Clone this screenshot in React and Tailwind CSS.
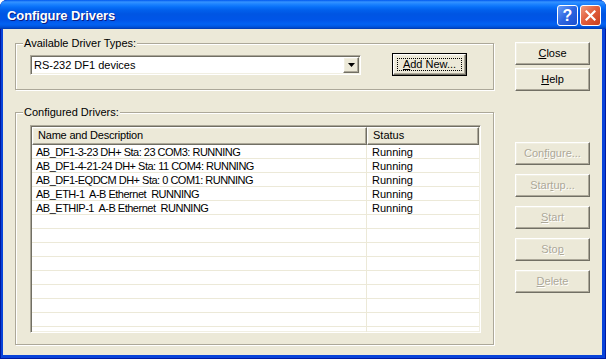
import React from "react";

const raised =
  "bg-[#ECE9D8] border border-t-white border-l-white border-r-[#716F64] border-b-[#716F64] shadow-[inset_-1px_-1px_0_#ACA899,inset_1px_1px_0_#F1EFE2]";
const sunken =
  "border border-t-[#ACA899] border-l-[#ACA899] border-r-white border-b-white shadow-[inset_1px_1px_0_#716F64,inset_-1px_-1px_0_#F1EFE2]";
const etched =
  "border border-[#ACA899] shadow-[inset_1px_1px_0_#fff,1px_1px_0_#fff]";

function U({ children }) {
  return <span className="underline underline-offset-[1px]">{children}</span>;
}

function Btn({ children, disabled, className = "" }) {
  return (
    <div
      className={`w-[75px] h-[23px] flex items-center justify-center text-[11px] ${raised} ${
        disabled
          ? "text-[#ACA899] [text-shadow:1px_1px_0_#fff]"
          : "text-black"
      } ${className}`}
    >
      {children}
    </div>
  );
}

function Group({ label, children, className = "" }) {
  return (
    <div className={`${etched} ${className}`}>
      <div className="-mt-[7px] ml-[7px] w-fit px-[1px] bg-[#ECE9D8] leading-[13px] text-[11px]">
        {label}
      </div>
      {children}
    </div>
  );
}

const rows = [
  "AB_DF1-3-23 DH+ Sta: 23 COM3: RUNNING",
  "AB_DF1-4-21-24 DH+ Sta: 11 COM4: RUNNING",
  "AB_DF1-EQDCM DH+ Sta: 0 COM1: RUNNING",
  "AB_ETH-1  A-B Ethernet  RUNNING",
  "AB_ETHIP-1  A-B Ethernet  RUNNING",
];

export default function App() {
  const all = [...rows, ...Array(10).fill(null)];
  return (
    <div className="w-[606px] h-[359px] bg-white font-['Liberation_Sans',Arial,sans-serif] text-black">
      <div className="w-full h-full flex flex-col rounded-t-[7px] overflow-hidden bg-[#0843D9] shadow-[inset_0_0_0_1px_#0019A0]">
        {/* Title bar */}
        <div className="h-[29px] shrink-0 flex items-start pt-[5px] pl-[7px] pr-[5px] bg-[linear-gradient(to_bottom,#0058EE_0px,#3593FF_2px,#1E84FF_4px,#0870F8_7px,#0260EC_10px,#0055E3_14px,#0055E8_20px,#0262F2_24px,#005AE6_26px,#0047C9_28px,#0039A8_29px)]">
          <div className="flex-1 text-white font-bold text-[13px] leading-[21px] tracking-[-0.1px] [text-shadow:1px_1px_0_#0A1B80]">
            Configure Drivers
          </div>
          <div className="flex gap-[2px]">
            <div className="w-[21px] h-[21px] rounded-[3px] border border-white bg-[linear-gradient(135deg,#6A9EF8_0%,#2C65E0_50%,#1C4FD0_100%)] flex items-center justify-center text-white font-bold text-[16px] leading-none">
              ?
            </div>
            <div className="w-[21px] h-[21px] rounded-[3px] border border-white bg-[linear-gradient(135deg,#F09A7E_0%,#E2603E_45%,#C93F1D_100%)] flex items-center justify-center">
              <svg width="11" height="11" viewBox="0 0 11 11">
                <path d="M1.5 1.5 L9.5 9.5 M9.5 1.5 L1.5 9.5" stroke="white" strokeWidth="2.2" strokeLinecap="square" />
              </svg>
            </div>
          </div>
        </div>

        {/* Body */}
        <div className="flex-1 ml-[3px] mr-[4px] mb-[4px] bg-[#ECE9D8] flex text-[11px]">
          {/* Left column */}
          <div className="w-[479px] ml-[12px] flex flex-col pt-[14px] pb-[10px]">
            <Group label="Available Driver Types:" className="h-[47px]">
              <div className="mt-[3px] pl-[14px] h-[23px] flex items-center">
                <div className={`w-[331px] h-[20px] bg-white p-[1px] flex ${sunken}`}>
                  <div className="flex-1 pl-[2px] leading-[16px]">RS-232 DF1 devices</div>
                  <div className={`w-[16px] h-full flex items-center justify-center ${raised}`}>
                    <svg width="7" height="4" viewBox="0 0 7 4">
                      <path d="M0 0 H7 L3.5 4 Z" fill="black" />
                    </svg>
                  </div>
                </div>
                <div className="ml-[31px] w-[75px] h-[23px] border border-black">
                  <div className={`w-full h-full flex items-center justify-center p-[3px] ${raised}`}>
                    <div className="w-full h-full border border-dotted border-black flex items-center justify-center">
                      <span>
                        <U>A</U>dd New...
                      </span>
                    </div>
                  </div>
                </div>
              </div>
            </Group>

            <Group label="Configured Drivers:" className="mt-[22px] flex-1 flex flex-col">
              <div className="mt-[6px] pl-[14px] pr-[12px] pb-[11px] flex-1 flex">
                <div className={`flex-1 h-[208px] bg-white p-[1px] overflow-hidden flex flex-col ${sunken}`}>
                  <div className="h-[18px] shrink-0 flex">
                    <div className={`w-[335px] pl-[5px] leading-[15px] tracking-[-0.2px] ${raised}`}>Name and Description</div>
                    <div className={`flex-1 pl-[5px] leading-[15px] ${raised}`}>Status</div>
                  </div>
                  {all.map((r, i) => (
                    <div key={i} className="h-[14px] shrink-0 flex border-b border-[#ECE9D8]">
                      <div className="w-[335px] pl-[4px] pt-[1px] leading-[13px] whitespace-pre tracking-[-0.5px] border-r border-[#ECE9D8]">
                        {r || ""}
                      </div>
                      <div className="flex-1 pl-[5px] pt-[1px] leading-[13px]">{r ? "Running" : ""}</div>
                    </div>
                  ))}
                </div>
              </div>
            </Group>
          </div>

          {/* Right column */}
          <div className="ml-[21px] w-[75px] flex flex-col pt-[13px]">
            <Btn>
              <span>
                <U>C</U>lose
              </span>
            </Btn>
            <Btn className="mt-[3px]">
              <span>
                <U>H</U>elp
              </span>
            </Btn>
            <Btn disabled className="mt-[51px]">
              <span>
                Con<U>f</U>igure...
              </span>
            </Btn>
            <Btn disabled className="mt-[9px]">
              <span>
                Star<U>t</U>up...
              </span>
            </Btn>
            <Btn disabled className="mt-[9px]">
              <span>
                <U>S</U>tart
              </span>
            </Btn>
            <Btn disabled className="mt-[9px]">
              <span>
                Sto<U>p</U>
              </span>
            </Btn>
            <Btn disabled className="mt-[9px]">
              <span>
                <U>D</U>elete
              </span>
            </Btn>
          </div>
        </div>
      </div>
    </div>
  );
}
